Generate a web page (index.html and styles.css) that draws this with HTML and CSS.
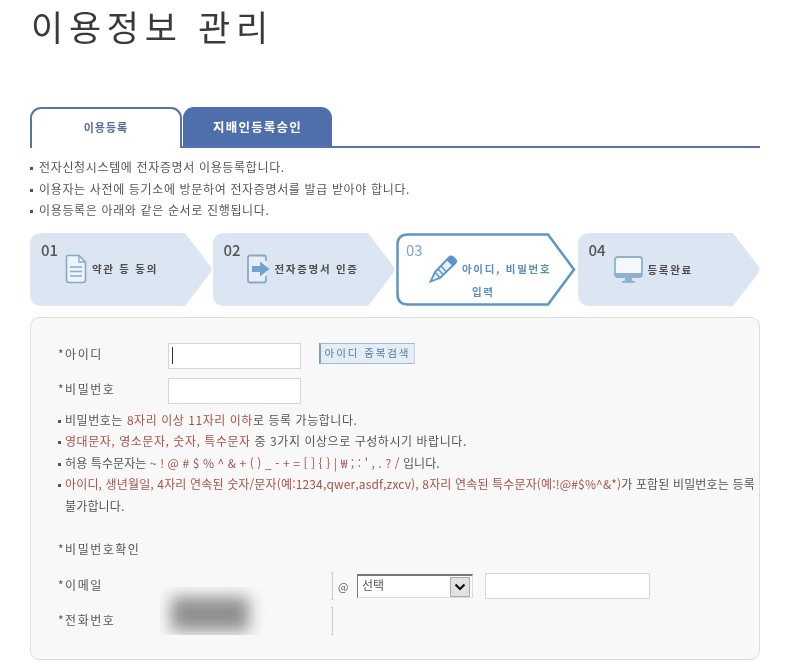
FILE: index.html
```html
<!DOCTYPE html>
<html lang="ko">

<head>
    <meta charset="UTF-8">
    <title>이용정보 관리</title>
    <link rel="stylesheet" href="styles.css">
</head>

<body>
    <div class="page">
        <h1 class="title">이용정보 관리</h1>

        <!-- Tabs -->
        <div class="tabs">
            <div class="tab tab-active">이용등록</div>
            <div class="tab tab-other">지배인등록승인</div>
        </div>

        <ul class="intro">
            <li>전자신청시스템에 전자증명서 이용등록합니다.</li>
            <li>이용자는 사전에 등기소에 방문하여 전자증명서를 발급 받아야 합니다.</li>
            <li>이용등록은 아래와 같은 순서로 진행됩니다.</li>
        </ul>

        <!-- Steps -->
        <div class="steps">
            <div class="step">
                <svg class="step-bg" viewBox="0 0 182 73"><path d="M12 0H155L181 34Q182 36.5 181 39L155 73H12Q0 73 0 61V12Q0 0 12 0Z" fill="#dbe6f2"/></svg>
                <div class="step-num">01</div>
                <div class="step-body body-1">
                    <svg class="icon" width="22" height="30" viewBox="0 0 22 30"><path d="M3 1.5H14L20.5 8V26Q20.5 28.5 18 28.5H4Q1.5 28.5 1.5 26V3.5Q1.5 1.5 3 1.5Z" fill="#eef4fa" stroke="#86abc9" stroke-width="1.6"/><path d="M14 1.5V8H20.5" fill="none" stroke="#86abc9" stroke-width="1.3"/><path d="M5 13H17M5 17.5H17M5 22H17" stroke="#86abc9" stroke-width="1.5"/></svg>
                    <span>약관 등 동의</span>
                </div>
            </div>
            <div class="step">
                <svg class="step-bg" viewBox="0 0 182 73"><path d="M12 0H155L181 34Q182 36.5 181 39L155 73H12Q0 73 0 61V12Q0 0 12 0Z" fill="#dbe6f2"/></svg>
                <div class="step-num">02</div>
                <div class="step-body body-2">
                    <svg class="icon" width="24" height="30" viewBox="0 0 24 30"><path d="M2 2H15L20 7V26Q20 28 18 28H4Q2 28 2 26Z" fill="#eef4fa" opacity=".6"/><path d="M20 7V3.5Q20 1.5 18 1.5H4Q2 1.5 2 3.5V26Q2 28.5 4 28.5H18Q20 28.5 20 26V22" fill="none" stroke="#86abc9" stroke-width="1.8"/><path d="M6 12H14V7.5L23.5 15L14 22.5V18H6Z" fill="#6ea4cf"/></svg>
                    <span>전자증명서 인증</span>
                </div>
            </div>
            <div class="step step-current">
                <svg class="step-bg" viewBox="0 0 182 73"><path d="M13 1.5H153L179 36.5L153 71.5H13Q2.5 71.5 2.5 61V12Q2.5 1.5 13 1.5Z" fill="#fff" stroke="#5b96c6" stroke-width="2.5"/></svg>
                <div class="step-num">03</div>
                <div class="step-body body-3">
                    <svg class="icon" width="29" height="29" viewBox="0 0 29 29"><path d="M6 18L20 3.5Q22 1.5 24.5 3.5L26.5 5.5Q28 7.5 26 9.5L11 24L1.5 27.5Z" fill="#eaf2f9" stroke="#5b96c6" stroke-width="1.8"/><path d="M6 18L11 24M9 15L14 20.5M12 12L17 17.5M18 5.5L24 11.5" stroke="#5b96c6" stroke-width="1.5" fill="none"/><path d="M20 3.5Q22 1.5 24.5 3.5L26.5 5.5Q28 7.5 26 9.5L24 11.5L18 5.5Z" fill="#5b96c6"/></svg>
                    <span>아이디, 비밀번호</span>
                </div>
                <div class="step-line2">입력</div>
            </div>
            <div class="step">
                <svg class="step-bg" viewBox="0 0 182 73"><path d="M12 0H155L181 34Q182 36.5 181 39L155 73H12Q0 73 0 61V12Q0 0 12 0Z" fill="#dbe6f2"/></svg>
                <div class="step-num">04</div>
                <div class="step-body body-4">
                    <svg class="icon" width="29" height="28" viewBox="0 0 29 28"><rect x="1" y="1" width="27" height="20" rx="2.5" fill="#f4f8fb" stroke="#8fb1cd" stroke-width="1.8"/><path d="M1 17H28V19Q28 21.5 25.5 21.5H3.5Q1 21.5 1 19Z" fill="#8fb1cd"/><path d="M11.5 21.5H17.5L18.5 25H10.5Z" fill="#8fb1cd"/><rect x="8" y="25" width="13" height="1.8" fill="#8fb1cd"/></svg>
                    <span>등록완료</span>
                </div>
            </div>
        </div>

        <!-- Form -->
        <div class="panel">
            <div class="row">
                <label>*아이디</label>
                <input class="text-input caret" type="text">
                <button class="check-btn">아이디 중복검색</button>
            </div>
            <div class="row row-pw">
                <label>*비밀번호</label>
                <input class="text-input" type="password">
            </div>

            <ul class="notes">
                <li class="wide">비밀번호는 <em>8자리 이상 11자리 이하</em>로 등록 가능합니다.</li>
                <li class="wide"><em>영대문자, 영소문자, 숫자, 특수문자</em> 중 3가지 이상으로 구성하시기 바랍니다.</li>
                <li>허용 특수문자는 <em>~ ! @ # $ % ^ &amp; + ( ) _ - + = [ ] { } | ₩ ; : ' , . ? /</em> 입니다.</li>
                <li class="long"><em>아이디, 생년월일, 4자리 연속된 숫자/문자(예:1234,qwer,asdf,zxcv), 8자리 연속된 특수문자(예:!@#$%^&amp;*)</em>가 포함된 비밀번호는 등록 불가합니다.</li>
            </ul>

            <div class="row row-confirm">
                <label>*비밀번호확인</label>
            </div>
            <div class="row row-mail">
                <label>*이메일</label>
                <div class="masked"></div>
                <span class="at">@</span>
                <div class="select">
                    <span class="select-text">선택</span>
                    <span class="select-arrow">
                        <svg width="12" height="8" viewBox="0 0 12 8"><path d="M1.5 1.5L6 6L10.5 1.5" fill="none" stroke="#111" stroke-width="2.2"/></svg>
                    </span>
                </div>
                <input class="text-input mail-domain" type="text">
            </div>
            <div class="row row-tel">
                <label>*전화번호</label>
                <div class="masked">
                    <div class="blob"></div>
                </div>
            </div>
        </div>
    </div>
</body>

</html>
```

FILE: styles.css
```css
body {
    margin: 0;
    background: white;
    font-family: "Noto Sans CJK KR", "Noto Sans", sans-serif;
    color: #555;
    font-size: 12px;
}

.page {
    width: 730px;
    padding-left: 30px;
    filter: blur(0.45px);
}

.title {
    margin: 0 0 0 1px;
    height: 48px;
    line-height: 51px;
    font-size: 35px;
    font-weight: 400;
    letter-spacing: 5.7px;
    color: #3a3a3a;
}

.tabs {
    display: flex;
    margin-top: 59px;
    height: 39px;
    border-bottom: 2px solid #5673ad;
}

.tab {
    box-sizing: border-box;
    display: flex;
    align-items: center;
    justify-content: center;
    font-weight: bold;
    border-radius: 11px 11px 0 0;
}

.tab-active {
    width: 152px;
    height: 41px;
    padding-bottom: 3px;
    background: white;
    border: 2px solid #5673ad;
    border-bottom: none;
    color: #556d9c;
    font-size: 11px;
    letter-spacing: 1px;
}

.tab-other {
    width: 149px;
    height: 39px;
    margin-left: 1px;
    background: #4f6fac;
    color: white;
    font-size: 12.5px;
    letter-spacing: 1.2px;
}

.intro {
    list-style: none;
    margin: 8px 0 0;
    padding: 0;
}

.intro li {
    height: 21.5px;
    line-height: 21.5px;
    letter-spacing: 0.65px;
}

.intro li::before,
.notes li::before {
    content: "";
    display: inline-block;
    width: 3px;
    height: 3px;
    margin-right: 6px;
    vertical-align: middle;
    background: #555;
}

.steps {
    display: grid;
    grid-template-columns: repeat(4, 182.5px);
    margin-top: 12px;
    height: 73px;
}

.step {
    position: relative;
    width: 182px;
    height: 73px;
}

.step-bg {
    position: absolute;
    left: 0;
    top: 0;
    width: 182px;
    height: 73px;
}

.step-num {
    position: relative;
    padding: 6px 0 0 11px;
    height: 22px;
    font-size: 15px;
    font-weight: 500;
    line-height: 22px;
    color: #555;
}

.step-body {
    position: relative;
    display: flex;
    align-items: center;
    gap: 5px;
    margin-top: -7px;
    font-size: 10.5px;
    font-weight: bold;
    letter-spacing: 1.7px;
    color: #4c4c4c;
}

.body-1 { padding-left: 35px; }
.body-2 { padding-left: 33px; }
.body-3 { padding-left: 34px; color: #5b8fb8; margin-top: -7px; gap: 4px; }
.body-4 { padding-left: 36px; margin-top: -5px; gap: 5px; }

.step-current .step-num {
    color: #7ba6c9;
    font-weight: 400;
}

.step-line2 {
    position: relative;
    margin: 1px 0 0 77px;
    font-size: 10.5px;
    font-weight: bold;
    letter-spacing: 1.7px;
    color: #5b8fb8;
}

.panel {
    margin-top: 11px;
    height: 343px;
    box-sizing: border-box;
    background: #f8f8f8;
    border: 1px solid #ddd;
    border-radius: 9px;
    padding: 25px 0 0 27px;
}

.row {
    display: flex;
    align-items: center;
}

.row label {
    width: 110px;
    padding-bottom: 4px;
    letter-spacing: 1.5px;
}

.row-pw {
    margin-top: 9px;
}

.text-input {
    width: 133px;
    height: 26px;
    box-sizing: border-box;
    margin: 0;
    padding: 0;
    background: white;
    border: 1px solid #d5d5d5;
}

.caret {
    background: white linear-gradient(#333, #333) 3px 3px / 1px 17px no-repeat;
}

.check-btn {
    align-self: flex-start;
    margin-left: 18px;
    width: 96px;
    height: 21px;
    padding: 0 0 2px;
    background: #e3edf6;
    border: 1px solid #9db9d5;
    border-right-color: #ccd;
    border-left: 2px solid #7f9fc0;
    font-family: inherit;
    font-size: 10.5px;
    letter-spacing: 1.9px;
    color: #5b7896;
}

.notes {
    list-style: none;
    margin: 5px 0 0;
    padding: 0;
    line-height: 21.5px;
    letter-spacing: 0.1px;
}

.notes li {
    padding-left: 7px;
    text-indent: -7px;
}

.notes li.wide {
    letter-spacing: 0.55px;
}

.notes li.long {
    letter-spacing: 0.15px;
}

.notes li::before {
    margin-right: 4px;
}

.notes em {
    font-style: normal;
    color: #a5524a;
}

.row-confirm {
    margin-top: 22px;
    height: 24px;
}

.row-mail {
    margin-top: 10px;
    height: 28px;
}

.row-tel {
    margin-top: 7px;
    height: 28px;
}

.masked {
    position: relative;
    width: 165px;
    height: 28px;
    box-sizing: border-box;
    clip-path: inset(-20px 0 0 -8px);
}

/* the bracket left over at the end of the hidden field */
.masked::after {
    content: "";
    position: absolute;
    right: 0;
    top: 0;
    width: 2px;
    height: 100%;
    box-sizing: border-box;
    border: 1px solid #ccc;
    border-left: none;
}

.blob {
    position: absolute;
    left: 3px;
    top: -10px;
    width: 78px;
    height: 34px;
    background: #8f8f8f;
    filter: blur(8px);
}

.at {
    width: 24px;
    padding-left: 5px;
    box-sizing: border-box;
    font-size: 11px;
    color: #666;
}

.select {
    display: flex;
    justify-content: space-between;
    align-items: center;
    width: 116px;
    height: 24px;
    box-sizing: border-box;
    padding-right: 2px;
    background: white;
    border-top: 2px solid #777;
    border-left: 1px solid #777;
    border-right: 1px solid #ddd;
    border-bottom: 1px solid #ddd;
}

.select-text {
    padding: 0 0 4px 4px;
}

.select-arrow {
    display: flex;
    align-items: center;
    justify-content: center;
    width: 18px;
    height: 18px;
    background: #e2e2e2;
    border: 1px solid #aaa;
}

.mail-domain {
    margin-left: 12px;
    width: 165px;
}
```
